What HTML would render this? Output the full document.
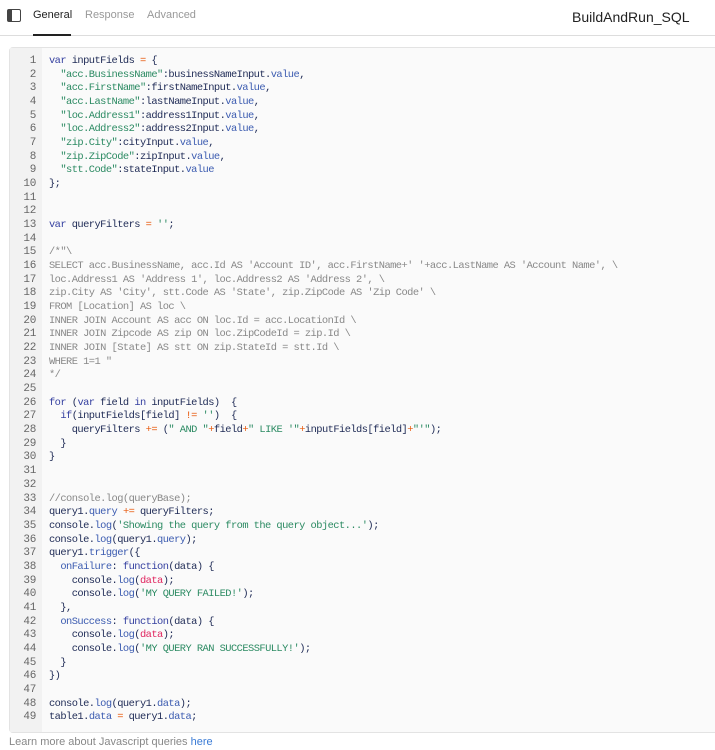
<!DOCTYPE html>
<html><head><style>
body{margin:0;width:715px;height:750px;background:#fff;font-family:"Liberation Sans",sans-serif;overflow:hidden;position:relative}
.top{position:absolute;left:0;top:0;width:715px;height:35px;border-bottom:1px solid #ddd}
.ico{position:absolute;left:7px;top:9px;width:12px;height:11px;border:1.5px solid #444;border-radius:2px}
.ico:after{content:"";position:absolute;left:0;top:0;width:4px;height:11px;background:#444}
.tab{position:absolute;top:9px;font-size:11px;color:#999}
.title{position:absolute;left:572px;top:9px;font-size:14px;color:#222}
.ul{position:absolute;left:33px;top:34px;width:38px;height:2px;background:#222}
.box{position:absolute;left:9px;top:47px;width:720px;height:684px;background:#fafafa;border:1px solid #e3e3e3;border-radius:4px}
.gut{position:absolute;left:0;top:0;width:32px;height:100%;background:#f2f2f2}
pre{position:absolute;margin:0;top:7px;font-family:"Liberation Mono",monospace;font-size:10.4px;letter-spacing:-0.55px;line-height:13.67px}
.ln{left:0;width:26px;text-align:right;color:#666;font-size:11px;letter-spacing:-0.3px}
.code{left:39px;color:#1e2a55}
.k{color:#3540a0}.s{color:#2b8a62}.o{color:#e8590c}.c{color:#888}.r{color:#e0245e}.p{color:#3b5bb0}
.foot{position:absolute;left:9px;top:736px;font-size:11px;color:#888}
.foot a{color:#3a7bd5;text-decoration:none}
</style></head><body>
<div class="top"><div class="ico"></div>
<span class="tab" style="left:33px;color:#222">General</span>
<span class="tab" style="left:85px">Response</span>
<span class="tab" style="left:147px">Advanced</span>
<div class="ul"></div>
<span class="title">BuildAndRun_SQL</span></div>
<div class="box"><div class="gut"></div>
<pre class="ln">1
2
3
4
5
6
7
8
9
10
11
12
13
14
15
16
17
18
19
20
21
22
23
24
25
26
27
28
29
30
31
32
33
34
35
36
37
38
39
40
41
42
43
44
45
46
47
48
49</pre>
<pre class="code"><span class="k">var</span> inputFields <span class="o">=</span> {
  <span class="s">"acc.BusinessName"</span>:businessNameInput.<span class="p">value</span>,
  <span class="s">"acc.FirstName"</span>:firstNameInput.<span class="p">value</span>,
  <span class="s">"acc.LastName"</span>:lastNameInput.<span class="p">value</span>,
  <span class="s">"loc.Address1"</span>:address1Input.<span class="p">value</span>,
  <span class="s">"loc.Address2"</span>:address2Input.<span class="p">value</span>,
  <span class="s">"zip.City"</span>:cityInput.<span class="p">value</span>,
  <span class="s">"zip.ZipCode"</span>:zipInput.<span class="p">value</span>,
  <span class="s">"stt.Code"</span>:stateInput.<span class="p">value</span>
};


<span class="k">var</span> queryFilters <span class="o">=</span> <span class="s">''</span>;

<span class="c">/*"\
SELECT acc.BusinessName, acc.Id AS 'Account ID', acc.FirstName+' '+acc.LastName AS 'Account Name', \
loc.Address1 AS 'Address 1', loc.Address2 AS 'Address 2', \
zip.City AS 'City', stt.Code AS 'State', zip.ZipCode AS 'Zip Code' \
FROM [Location] AS loc \
INNER JOIN Account AS acc ON loc.Id = acc.LocationId \
INNER JOIN Zipcode AS zip ON loc.ZipCodeId = zip.Id \
INNER JOIN [State] AS stt ON zip.StateId = stt.Id \
WHERE 1=1 "
*/</span>

<span class="k">for</span> (<span class="k">var</span> field <span class="k">in</span> inputFields)  {
  <span class="k">if</span>(inputFields[field] <span class="o">!=</span> <span class="s">''</span>)  {
    queryFilters <span class="o">+=</span> (<span class="s">" AND "</span><span class="o">+</span>field<span class="o">+</span><span class="s">" LIKE '"</span><span class="o">+</span>inputFields[field]<span class="o">+</span><span class="s">"'"</span>);
  }
}


<span class="c">//console.log(queryBase);</span>
query1.<span class="p">query</span> <span class="o">+=</span> queryFilters;
console.<span class="p">log</span>(<span class="s">'Showing the query from the query object...'</span>);
console.<span class="p">log</span>(query1.<span class="p">query</span>);
query1.<span class="p">trigger</span>({
  <span class="p">onFailure</span>: <span class="k">function</span>(data) {
    console.<span class="p">log</span>(<span class="r">data</span>);
    console.<span class="p">log</span>(<span class="s">'MY QUERY FAILED!'</span>);
  },
  <span class="p">onSuccess</span>: <span class="k">function</span>(data) {
    console.<span class="p">log</span>(<span class="r">data</span>);
    console.<span class="p">log</span>(<span class="s">'MY QUERY RAN SUCCESSFULLY!'</span>);
  }
})

console.<span class="p">log</span>(query1.<span class="p">data</span>);
table1.<span class="p">data</span> <span class="o">=</span> query1.<span class="p">data</span>;</pre>
</div>
<div class="foot">Learn more about Javascript queries <a>here</a></div>
</body></html>
